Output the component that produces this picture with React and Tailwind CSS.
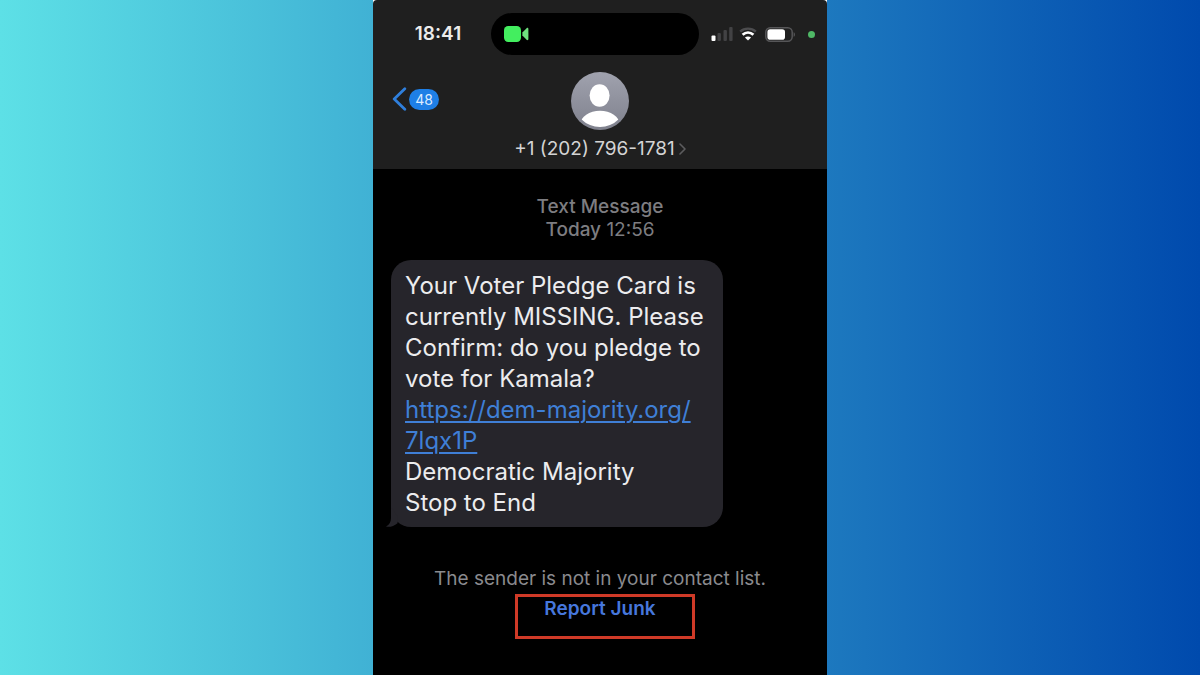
import React from "react";

// Message lines above and below the link
const intro = ["Your Voter Pledge Card is", "currently MISSING. Please", "Confirm: do you pledge to", "vote for Kamala?"];
const outro = ["Democratic Majority", "Stop to End"];

const SignalIcon = () => (
  <svg width="22" height="16" viewBox="0 0 22 16" aria-hidden="true">
    <rect x="0.5" y="9.5" width="4" height="5.5" rx="1" fill="#fff" />
    <rect x="6.5" y="7" width="3.4" height="8" rx="1" fill="#424244" />
    <rect x="12.5" y="4" width="3.4" height="11" rx="1" fill="#424244" />
    <rect x="18.2" y="1" width="3.4" height="14" rx="1" fill="#424244" />
  </svg>
);

const WifiIcon = () => (
  <svg width="18" height="14" viewBox="0 0 18 14" fill="none" aria-hidden="true">
    <path d="M1.2 4.6C5.6 0.6 12.4 0.6 16.8 4.6" stroke="#4c4c4e" strokeWidth="2.4" />
    <path d="M3.6 7.8C6.8 4.9 11.2 4.9 14.4 7.8" stroke="#fff" strokeWidth="2.8" />
    <path d="M9 13.6L5.9 10.6C7.7 9.2 10.3 9.2 12.1 10.6Z" fill="#fff" />
  </svg>
);

const BatteryIcon = () => (
  <svg width="31" height="15" viewBox="0 0 31 15" fill="none" aria-hidden="true">
    <rect x="0.8" y="0.8" width="26.4" height="13.4" rx="4.4" stroke="#565658" strokeWidth="1.5" />
    <rect x="2.4" y="2.3" width="17.6" height="10.4" rx="2.8" fill="#fff" />
    <path d="M28.6 5.2C30.4 5.8 30.4 9.2 28.6 9.8Z" fill="#565658" />
  </svg>
);

const CameraIcon = () => (
  <svg width="25" height="16" viewBox="0 0 25 16" aria-hidden="true">
    <rect x="0" y="0" width="17" height="16" rx="4.2" fill="#43ee5f" />
    <path d="M18.4 6.4L22.6 2.2C23.4 1.5 24.4 1.8 24.4 2.9V13.1C24.4 14.2 23.4 14.5 22.6 13.8L18.4 9.6Z" fill="#6fe07f" />
  </svg>
);

const Avatar = () => (
  <svg width="58" height="58" viewBox="0 0 58 58" aria-hidden="true">
    <defs>
      <linearGradient id="avatarFill" x1="0" y1="0" x2="0" y2="1">
        <stop offset="0" stopColor="#a0a2ae" />
        <stop offset="1" stopColor="#7f818d" />
      </linearGradient>
      <clipPath id="avatarClip">
        <circle cx="29" cy="29" r="26" />
      </clipPath>
    </defs>
    <circle cx="29" cy="29" r="29" fill="url(#avatarFill)" />
    <ellipse cx="28.6" cy="23.5" rx="10" ry="11.3" fill="#fff" />
    <ellipse cx="29" cy="52" rx="19.5" ry="13.2" fill="#fff" clipPath="url(#avatarClip)" />
  </svg>
);

const StatusBar = () => (
  <div className="grid grid-cols-[118px_1fr_128px] items-center">
    <time className="pl-3 text-center text-[19px] leading-6 font-semibold text-[#ececec]">18:41</time>
    <div className="flex h-[42px] items-center rounded-full bg-black pl-[13px]">
      <CameraIcon />
    </div>
    <div className="flex items-center pl-3">
      <SignalIcon />
      <span className="ml-1.5">
        <WifiIcon />
      </span>
      <span className="ml-2">
        <BatteryIcon />
      </span>
      <span className="ml-3 size-[7px] rounded-full bg-[#4fb866]" />
    </div>
  </div>
);

const ContactBar = () => (
  <div className="mt-[17px] grid grid-cols-[1fr_auto_1fr] items-start">
    <button type="button" aria-label="Back" className="flex h-[54px] items-center pl-[19px]">
      <svg width="15" height="24" viewBox="0 0 15 24" fill="none" aria-hidden="true">
        <path d="M12.8 1.8L2.2 12L12.8 22.2" stroke="#2f7fdc" strokeWidth="2.8" strokeLinecap="round" strokeLinejoin="round" />
      </svg>
      <span className="ml-0.5 flex h-[21px] w-[30px] items-center justify-center rounded-full bg-[#1e7fe6] text-[14px] text-[#dcecff]">
        48
      </span>
    </button>
    <Avatar />
  </div>
);

const App = () => {
  return (
    <main className="min-h-screen bg-linear-to-r/srgb from-[#5de0e6] to-[#004aad] font-['Inter','Liberation_Sans',sans-serif]">
      <div className="mx-auto flex min-h-screen w-full max-w-[454px] flex-col bg-white">
        <header className="rounded-t-[4px] bg-[#1f1f1f] pt-[13px] pb-2">
          <StatusBar />
          <ContactBar />
          <button type="button" className="mx-auto mt-[7px] flex items-center gap-1 text-[19px] leading-6 text-[#d4d4d4]">
            +1 (202) 796-1781
            <svg width="7" height="12" viewBox="0 0 7 12" fill="none" aria-hidden="true">
              <path d="M1 1L6 6L1 11" stroke="#5c5c5e" strokeWidth="1.6" strokeLinecap="round" strokeLinejoin="round" />
            </svg>
          </button>
        </header>

        <section className="flex-1 bg-black pt-[26px]">
          <div className="text-center text-[19px] leading-[23px] text-[#7d7d81]">
            <p className="font-medium">Text Message</p>
            <p>
              <span className="font-medium">Today</span> 12:56
            </p>
          </div>

          {/* Incoming message */}
          <div className="relative mt-[19px] ml-[18px] w-[332px] rounded-[20px] bg-[#26252b] pt-2.5 pb-[9px] pl-3.5 text-[24px] leading-[31px] whitespace-nowrap text-[#ececee]">
            {intro.map((line) => (
              <p key={line}>{line}</p>
            ))}
            <a href="https://dem-majority.org/7lqx1P" className="text-[#3f7fd6] underline decoration-2 underline-offset-3">
              https://dem-majority.org/
              <br />
              7lqx1P
            </a>
            {outro.map((line) => (
              <p key={line}>{line}</p>
            ))}
            <svg className="absolute bottom-0 -left-1.5" width="20" height="20" viewBox="0 0 20 20" aria-hidden="true">
              <path d="M6 0V11C6 15 4.5 17.6 1 19.6C5 20.4 9 19 12.5 16.2L13 10Z" fill="#26252b" />
            </svg>
          </div>

          <div className="mt-10 flex flex-col items-center gap-[7px] text-[19px] leading-[23px]">
            <p className="text-[#8a8a8e]">The sender is not in your contact list.</p>
            <button type="button" className="relative font-semibold text-[#4677dc]">
              Report Junk
              {/* Highlight box */}
              <span className="absolute -top-[3px] left-1/2 -ml-[85px] h-[45px] w-[180px] border-3 border-[#cf3a27]" />
            </button>
          </div>
        </section>
      </div>
    </main>
  );
};

export default App;
